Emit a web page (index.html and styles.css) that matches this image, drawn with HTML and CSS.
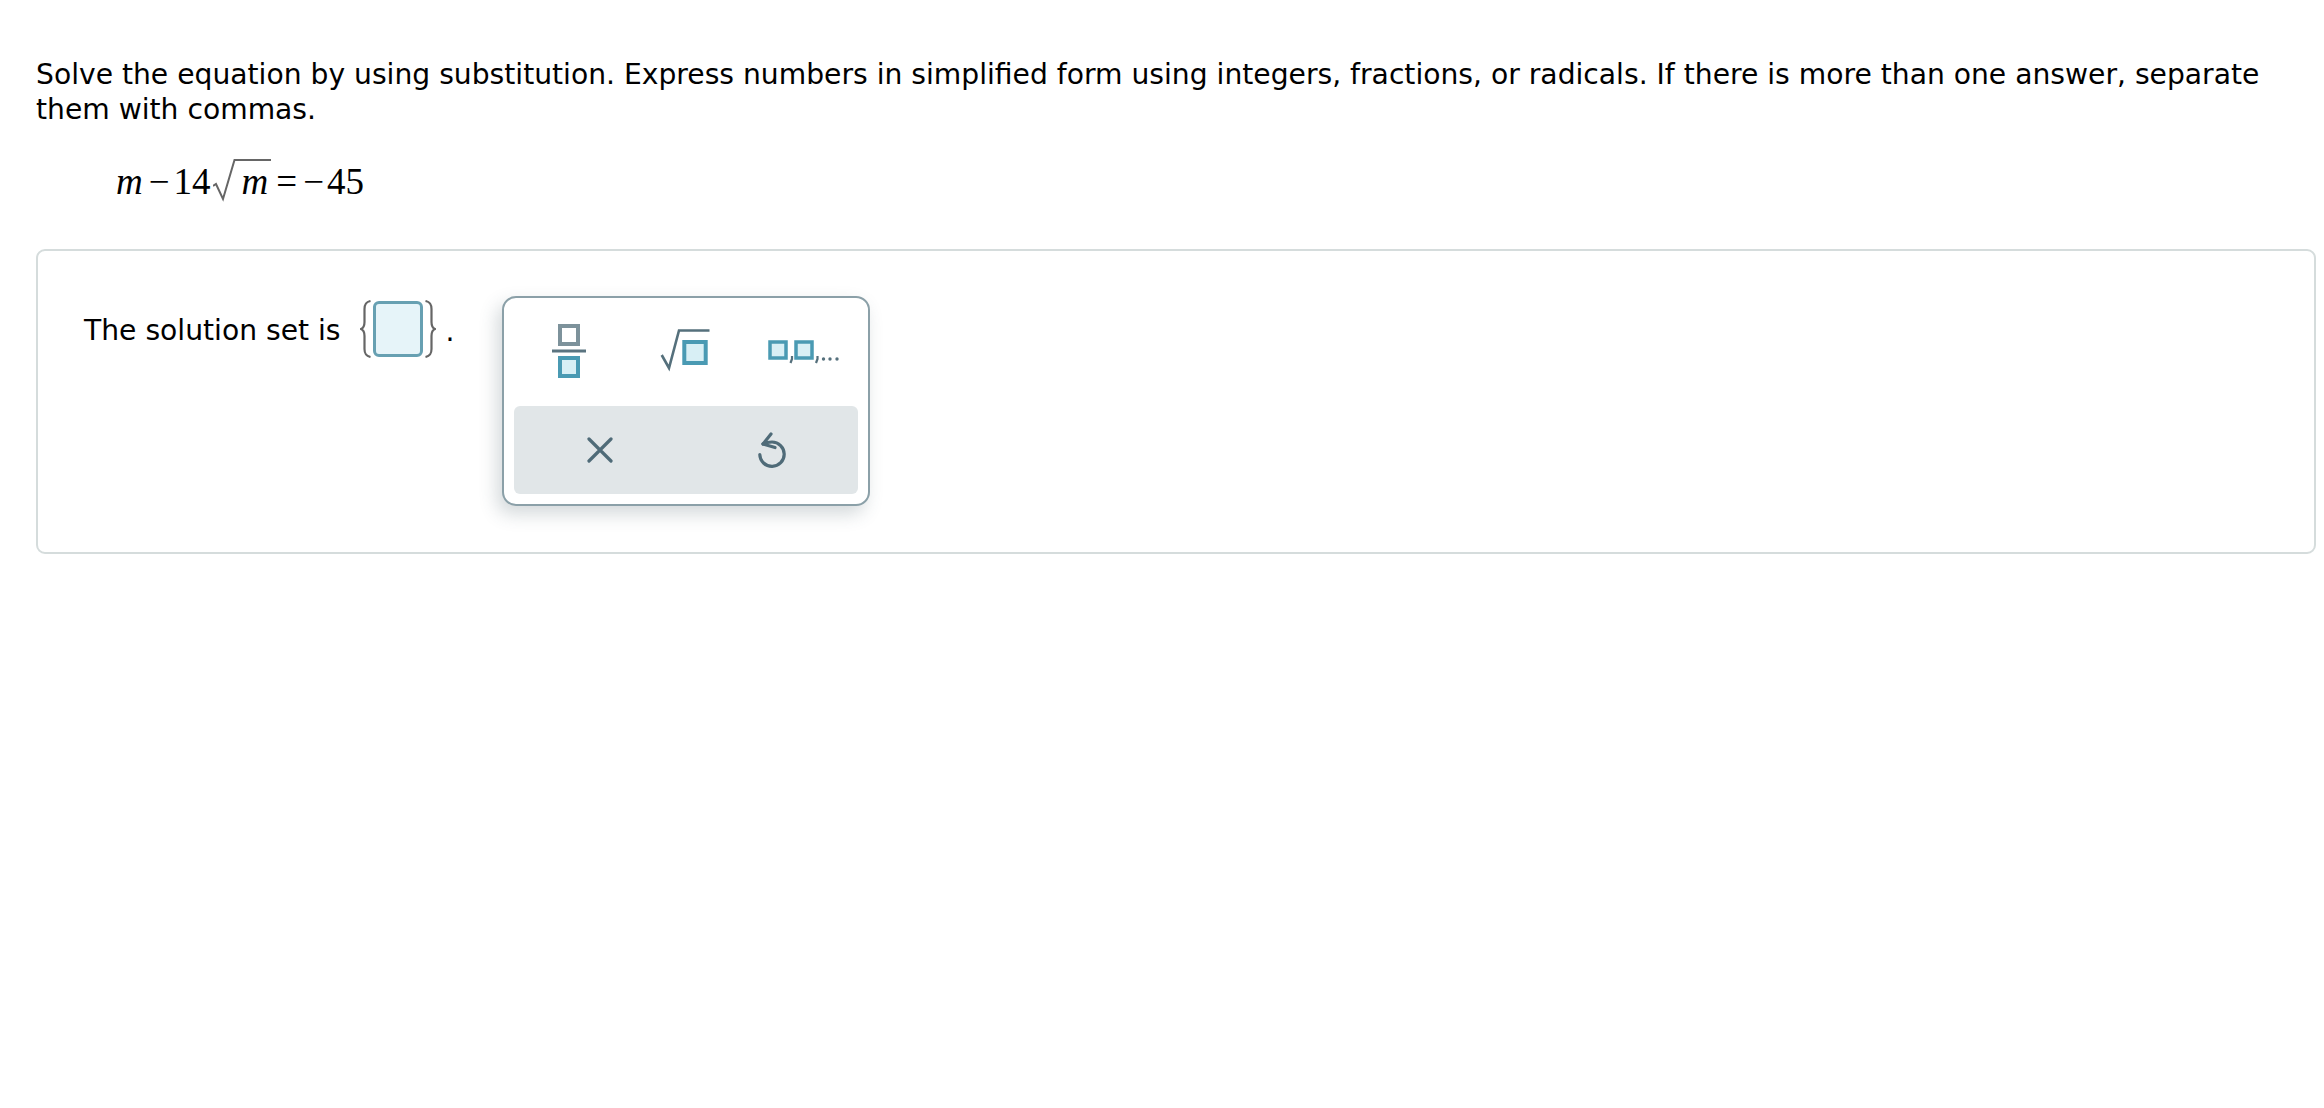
FILE: index.html
```html
<!DOCTYPE html>
<html lang="en">
<head>
<meta charset="utf-8">
<title>Solve the equation</title>
<link rel="stylesheet" href="styles.css">
</head>
<body>
<main class="page">
  <p class="prompt">Solve the equation by using substitution. Express numbers in simplified form using integers, fractions, or radicals. If there is more than one answer, separate them with commas.</p>
  <div class="equation">
    <i class="var">m</i><span class="minus">−</span><span class="num">14</span><svg class="radical" width="25" height="44" viewBox="0 0 25 44"><path d="M0 27 L3 25 L10 40 L21.500 1 H25" fill="none" stroke="#666" stroke-width="2"/></svg><span class="radicand"><i class="var">m</i></span><span class="equals">=</span><span class="neg">−</span><span class="tail">45</span>
  </div>
  <section class="card">
    <div class="answer">
      <span class="label">The solution set is</span>
      <span class="set">
        <svg class="brace" width="12" height="58" viewBox="0 0 12 58"><path d="M10.500 1 C6 2 4.500 4 4.500 9 V22 C4.500 26 3.500 28 1 29 C3.500 30 4.500 32 4.500 36 V49 C4.500 54 6 56 10.500 57" fill="none" stroke="#666" stroke-width="2.200"/></svg>
        <span class="blank"></span>
        <svg class="brace" width="12" height="58" viewBox="0 0 12 58"><path d="M1.500 1 C6 2 7.500 4 7.500 9 V22 C7.500 26 8.500 28 11 29 C8.500 30 7.500 32 7.500 36 V49 C7.500 54 6 56 1.500 57" fill="none" stroke="#666" stroke-width="2.200"/></svg>
      </span>
      <span class="period">.</span>
    </div>
    <div class="palette">
      <div class="tools">
        <button class="tool" type="button" aria-label="Fraction">
          <svg width="40" height="58" viewBox="0 0 40 58"><rect x="9" y="4" width="18" height="18" fill="#fff" stroke="#7d929b" stroke-width="4"/><path d="M1 29 H35" stroke="#5b7480" stroke-width="2.800"/><rect x="9" y="36" width="18" height="18" fill="#d8eff5" stroke="#4a9ab3" stroke-width="4"/></svg>
        </button>
        <button class="tool" type="button" aria-label="Square root">
          <svg width="60" height="44" viewBox="0 0 60 44"><path d="M5.700 26 L13 39 L23 1.500 H53.500" fill="none" stroke="#55707c" stroke-width="2.600"/><rect x="28.300" y="13" width="21.400" height="21" fill="#d8eff5" stroke="#4a9ab3" stroke-width="4"/></svg>
        </button>
        <button class="tool" type="button" aria-label="List">
          <svg width="100" height="30" viewBox="0 0 100 30"><rect x="19" y="6" width="16" height="16" fill="#d8eff5" stroke="#4a9ab3" stroke-width="3.500"/><path d="M41 20 V23 L39.500 27" fill="none" stroke="#55707c" stroke-width="2.200"/><rect x="45" y="6" width="16" height="16" fill="#d8eff5" stroke="#4a9ab3" stroke-width="3.500"/><path d="M66.500 20 V23 L65 27" fill="none" stroke="#55707c" stroke-width="2.200"/><circle cx="72.500" cy="23" r="1.700" fill="#55707c"/><circle cx="79" cy="23" r="1.700" fill="#55707c"/><circle cx="86" cy="23" r="1.700" fill="#55707c"/></svg>
        </button>
      </div>
      <div class="actions">
        <button class="action" type="button" aria-label="Clear">
          <svg width="26" height="26" viewBox="0 0 26 26"><path d="M2 2 L24 24 M24 2 L2 24" stroke="#4f6b78" stroke-width="3.200" stroke-linecap="round"/></svg>
        </button>
        <button class="action" type="button" aria-label="Undo">
          <svg width="30" height="36" viewBox="0 0 30 36"><path d="M6 12 C9 10.500 12 10 15 10 A12.200 12.200 0 1 1 2.800 22.500" fill="none" stroke="#4f6b78" stroke-width="3.200" stroke-linecap="round"/><path d="M14 2 L6 12 L18 15.500" fill="none" stroke="#4f6b78" stroke-width="3.200" stroke-linecap="round" stroke-linejoin="round"/></svg>
        </button>
      </div>
    </div>
  </section>
</main>
</body>
</html>
```
FILE: styles.css
```css
* { box-sizing: border-box; }
html, body { margin: 0; background: #fff; }
body { font-family: "DejaVu Sans", Verdana, sans-serif; color: #000; }
.page { padding: 57px 8px 0 36px; }
.prompt { margin: 0; font-size: 28.2px; line-height: 35px; }
.equation {
  display: flex;
  align-items: baseline;
  height: 99px;
  margin: 23px 0 0 80px;
  font-family: "Liberation Serif", "Times New Roman", serif;
  font-size: 37px;
  line-height: 42px;
  color: #000;
}
.var { font-style: italic; }
.minus { margin: 0 4px 0 6px; }
.radical { margin-left: 2px; transform: translateY(9px); }
.radicand { padding: 0 3px 0 4px; border-top: 2px solid #666; }
.equals { margin-left: 5px; }
.neg { margin-left: 6px; }
.tail { margin-left: 3px; }
.card {
  position: relative;
  height: 305px;
  border: 2px solid #d5dcdc;
  border-radius: 9px;
  background: #fff;
}
.answer {
  display: flex;
  align-items: center;
  padding: 49px 0 0 46px;
  font-size: 28.2px;
  line-height: 35px;
}
.label { padding-top: 2px; }
.set { display: flex; align-items: center; gap: 1px; margin-left: 19px; }
.blank {
  width: 50px;
  height: 56px;
  border: 3px solid #67a0b2;
  border-radius: 6px;
  background: #e6f4f9;
}
.period { margin-left: 10px; padding-top: 4px; }
.palette {
  position: absolute;
  left: 464px;
  top: 45px;
  width: 368px;
  height: 210px;
  padding: 11px 10px 10px;
  border: 2px solid #8ba0a8;
  border-radius: 14px;
  background: #fff;
  box-shadow: -5px 8px 18px rgba(60, 80, 90, 0.22);
}
.tools { display: grid; grid-template-columns: repeat(3, 1fr); height: 84px; margin-bottom: 13px; }
.actions { display: grid; grid-template-columns: 1fr 1fr; height: 88px; border-radius: 6px; background: #e1e6e8; }
.tool, .action { display: flex; align-items: center; justify-content: center; padding: 0; border: 0; background: none; }
```
